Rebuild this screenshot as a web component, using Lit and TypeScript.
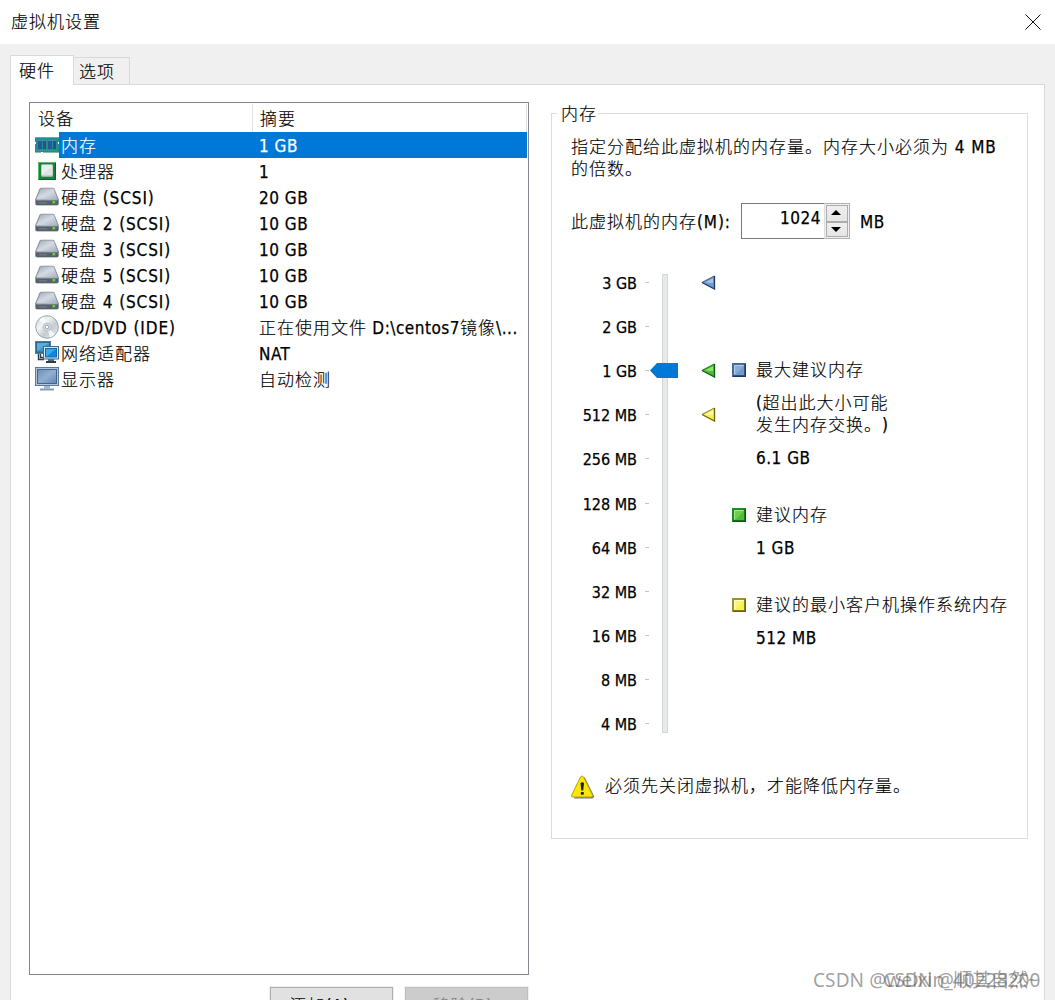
import { LitElement, html, svg, css } from "lit";
import { customElement, property } from "lit/decorators.js";
import { classMap } from "lit/directives/class-map.js";

/* Text made of runs: CJK characters sit on an even advance, Latin runs use the UI face. */
@customElement("ui-text")
class UiText extends LitElement {
  @property() text = "";
  @property() tone = "wide";
  static styles = css`
    :host { display: inline; white-space: pre; text-spacing-trim: space-all; }
    .cjk { font: 17px/0 "Noto Sans CJK SC", sans-serif; letter-spacing: 1px; font-weight: 300; -webkit-text-stroke: 0.15px currentColor; }
    .lat { font: 17px/22px "DejaVu Sans Condensed", "DejaVu Sans", sans-serif; font-stretch: condensed; -webkit-text-stroke: 0.25px currentColor; }
    .wide { letter-spacing: 0.5px; }
    .wider { letter-spacing: 0.9px; }
    .tight { font-size: 16px; letter-spacing: 0; }
  `;
  render() {
    const runs = this.text.match(/[\u3000-\u9fff\uff00-\uffef]+|[^\u3000-\u9fff\uff00-\uffef]+/g) ?? [];
    return runs.map((r) => {
      const cjk = /^[\u3000-\u9fff\uff00-\uffef]/.test(r);
      return html`<span class=${classMap({ cjk, lat: !cjk, [this.tone]: !cjk })}>${r}</span>`;
    });
  }
}

const diskIcon = svg`
  <defs><linearGradient id="d" x1="0" y1="0" x2="1" y2="1"><stop offset="0" stop-color="#9fa9b6"/><stop offset=".5" stop-color="#d3dae2"/><stop offset="1" stop-color="#a5afbc"/></linearGradient></defs>
  <g transform="translate(0 1.300)">
  <path d="M4.500 3.500Q5 2.500 6.500 2.500H17.500Q19 2.500 19.500 3.500L23.800 14V18.500Q23.800 20.300 22 20.300H2Q.2 20.300 .2 18.500V14Z" fill="#8791a0"/>
  <path d="M5.500 4Q5.800 3.300 6.500 3.300H17.500Q18.500 3.300 18.800 4L22.700 14H1.300Z" fill="url(#d)"/>
  <path d="M.8 14.500H23.200V18.500Q23.200 19.700 22 19.700H2Q.8 19.700 .8 18.500Z" fill="#57616d"/>
  <path d="M1.500 14.500H22.500" stroke="#bcc4ce" stroke-width="1"/>
  <path d="M4 17.500H12" stroke="#78828e"/><rect x="17" y="15.500" width="3.500" height="3" fill="#4f9b35"/><rect x="18" y="16" width="1.500" height="1.500" fill="#a7e57b"/></g>`;

const icons: Record<string, unknown> = {
  memory: svg`
    <rect x="0" y="5" width="24" height="15" fill="#238c94"/><path d="M0 5.500H24" stroke="#55aeb5"/>
    <rect x="0" y="17" width="24" height="4" fill="#238d82"/><path d="M0 20.500H24" stroke="#83bfa8"/>
    <path d="M1 18.500H23" stroke="#3ba7a5" stroke-dasharray="1 1"/>
    <rect x="3" y="8" width="4" height="9" fill="#235a91"/><rect x="8" y="8" width="3" height="9" fill="#265383"/><rect x="13" y="8" width="4" height="9" fill="#235a91"/><rect x="18" y="8" width="3" height="9" fill="#265383"/>
    <path d="M3 8.500H11M13 8.500H21" stroke="#4e86b1"/><rect x="0" y="10" width="1" height="2" fill="#fff"/><rect x="23" y="10" width="1" height="2" fill="#fff"/><rect x="6" y="20" width="2" height="1" fill="#fff"/>`,
  cpu: svg`
    <rect x="3" y="4" width="18" height="18" rx="1" fill="#16853a"/><path d="M3.500 21V4.500H20" stroke="#58b865" fill="none"/>
    <path d="M4 21.500H20.500V5" stroke="#086029" fill="none"/>
    <rect x="6" y="6" width="12" height="13" rx="1.500" fill="#9dafaa"/><rect x="6.500" y="7" width="11" height="10.500" rx="1" fill="#eceeed"/><path d="M7 17L17 8V17Z" fill="#dde3e1"/>`,
  disk: diskIcon,
  cd: svg`
    <defs><linearGradient id="c" x1="0" y1="0" x2="1" y2="1"><stop offset="0" stop-color="#c4ccd2"/><stop offset=".35" stop-color="#f2f5f6"/><stop offset=".6" stop-color="#c5ccd2"/><stop offset="1" stop-color="#e8ecee"/></linearGradient></defs>
    <g transform="translate(0 1)"><circle cx="12" cy="12" r="11.300" fill="url(#c)" stroke="#9ba7b0" stroke-width="1"/>
    <path d="M12 12L4 5A11 11 0 0 1 9 1.500ZM12 12L20 19A11 11 0 0 1 15 22.500Z" fill="#fff" opacity=".75"/>
    <circle cx="12" cy="12" r="4" fill="#d5dce1" stroke="#b1bbc2" stroke-width=".8"/><circle cx="12" cy="12" r="1.800" fill="#fff" stroke="#8b98a3" stroke-width=".8"/></g>`,
  net: svg`<g transform="translate(0 1)">
    <rect x="0.500" y="0.500" width="15" height="12" fill="#2d668e" stroke="#4a819e"/><rect x="2" y="2" width="12" height="8.500" fill="#4592c6"/><path d="M2 10V2H14Z" fill="#5aaddc"/>
    <path d="M3.500 13V18.500H9M5.500 13V16.500H9" fill="none" stroke="#263d4c" stroke-width="1.400"/>
    <rect x="8.500" y="5.500" width="15" height="12.500" fill="#d6e8f2" stroke="#336d93"/><rect x="10.500" y="7.500" width="11" height="8.500" fill="#0c86df" stroke="#1d639b"/><path d="M11 16V8H21Z" fill="#37a8f2"/>
    <rect x="13" y="18" width="6" height="2" fill="#506c7f"/><rect x="11" y="20" width="10" height="2" fill="#293f4f"/></g>`,
  display: svg`
    <defs><linearGradient id="m" x1="0" y1="0" x2="1" y2="1"><stop offset="0" stop-color="#6d8fb8"/><stop offset=".5" stop-color="#91afd0"/><stop offset="1" stop-color="#6386b2"/></linearGradient></defs>
    <g transform="translate(0 1)"><rect x=".5" y=".5" width="23" height="18" fill="#b4c7da" stroke="#557aa5"/><rect x="2.500" y="2.500" width="19" height="14" fill="url(#m)" stroke="#42658e"/>
    <rect x="9" y="19" width="6" height="2.500" fill="#a4b5c7"/><path d="M5 22.500H19" stroke="#829bb5" stroke-width="2"/></g>`,
};

const devices = [
  ["memory", "内存", "1 GB"],
  ["cpu", "处理器", "1"],
  ["disk", "硬盘 (SCSI)", "20 GB"],
  ["disk", "硬盘 2 (SCSI)", "10 GB"],
  ["disk", "硬盘 3 (SCSI)", "10 GB"],
  ["disk", "硬盘 5 (SCSI)", "10 GB"],
  ["disk", "硬盘 4 (SCSI)", "10 GB"],
  ["cd", "CD/DVD (IDE)", "正在使用文件 D:\\centos7镜像\\..."],
  ["net", "网络适配器", "NAT"],
  ["display", "显示器", "自动检测"],
];

const scale = ["3 GB", "2 GB", "1 GB", "512 MB", "256 MB", "128 MB", "64 MB", "32 MB", "16 MB", "8 MB", "4 MB"];

const hues: Record<string, string[]> = {
  blue: ["#4a6a98", "#1c3766", "#b4cdea", "#6f9bce"],
  green: ["#218a25", "#0b5a10", "#a3ee85", "#4fbd38"],
  yellow: ["#9a9430", "#6b6508", "#ffffc4", "#f7f24a"],
};
const markers: Record<number, string> = { 0: "blue", 2: "green", 3: "yellow" };

const triangle = (hue: string) => {
  const [light, dark, hi, fill] = hues[hue];
  return html`<svg width="15" height="15" viewBox="0 0 15 15">
    <path d="M1 7.500L14 .8V14.200Z" fill=${fill} />
    <path d="M4 7.500L12 3.300V8Z" fill=${hi} opacity=".8" />
    <path d="M13.500 1L1 7.500" stroke=${light} stroke-width="1.300" fill="none" />
    <path d="M1 7.500L13.500 14V1" stroke=${dark} stroke-width="1.300" fill="none" />
  </svg>`;
};
const swatch = (hue: string) => {
  const [light, dark, hi, fill] = hues[hue];
  return html`<svg width="14" height="14" viewBox="0 0 14 14">
    <rect width="14" height="14" fill=${light} /><path d="M1 13.300H13.300V1" fill="none" stroke=${dark} stroke-width="1.400" />
    <rect x="2" y="2" width="10" height="10" fill=${fill} /><path d="M2.500 11.500V2.500H11.500" fill="none" stroke=${hi} />
    <path d="M3 12V3H12Z" fill=${hi} opacity=".35" />
  </svg>`;
};

@customElement("app-root")
class AppRoot extends LitElement {
  static styles = css`
    :host { display: block; color: #000; font: 17px/22px "DejaVu Sans Condensed", "Noto Sans CJK SC", sans-serif; }
    * { box-sizing: border-box; }
    svg { display: block; flex: none; }
    .window { position: relative; width: 1055px; height: 1000px; overflow: hidden; background: #f0f0f0; display: flex; flex-direction: column; }
    .titlebar { height: 44px; flex: none; background: #fff; display: flex; justify-content: space-between; align-items: center; padding: 0 14px 0 11px; }
    .tabs { flex: none; height: 40px; padding-left: 10px; display: flex; align-items: flex-end; }
    .tab { border: 1px solid #d9d9d9; border-bottom: 0; height: 27px; width: 57px; padding: 3px 0 0 5px; margin-left: -1px; white-space: nowrap; }
    .tab.on { height: 30px; width: 64px; background: #fff; padding: 4px 0 0 8px; margin: 0 0 -1px; z-index: 1; }
    .page { flex: 1; min-height: 0; margin: 0 10px; border: 1px solid #d9d9d9; border-bottom: 0; background: #fff; padding: 17px 16px 0 18px; display: flex; gap: 22px; align-items: flex-start; }
    .left { width: 500px; flex: none; }
    .list { height: 873px; border: 1px solid #828790; padding: 0 1px; }
    .head { height: 29px; display: flex; }
    .head div { border-right: 1px solid #e2e2e2; margin-top: 1px; padding: 4px 0 0 7px; }
    .head .c1 { width: 222px; }
    .head .c2 { flex: 1; padding-left: 7px; }
    .row { display: flex; height: 26px; padding-left: 4px; }
    .row svg { width: 24px; height: 26px; }
    .cells { flex: 1; display: flex; align-items: center; padding: 2px 0 0 2px; white-space: nowrap; }
    .cells .name { width: 198px; }
    .row.sel .cells { background: #0078d7; color: #fff; }
    .buttons { display: flex; justify-content: flex-end; gap: 10px; margin-top: 11px; }
    .btn { width: 125px; height: 40px; border: 1px solid #f0f0f0; }
    .btn div { height: 38px; border: 1px solid #adadad; background: #e1e1e1; padding: 7px 8px 0 0; text-align: center; }
    .btn.off div { background: #ccc; border-color: #bfbfbf; color: #838383; }
    .group { flex: 1; height: 726px; margin-top: 11px; border: 1px solid #dcdcdc; padding-left: 19px; }
    .legend { width: 41px; height: 22px; background: #fff; margin: -11px 0 0 -14px; padding-left: 4px; white-space: nowrap; }
    .desc { margin-top: 11px; height: 44px; white-space: nowrap; }
    .amount { display: flex; align-items: center; margin-top: 23px; height: 36px; }
    .amount .cap { width: 170px; white-space: nowrap; padding-top: 1px; }
    .spin { width: 109px; height: 36px; border: 1px solid #7a7a7a; display: flex; justify-content: flex-end; }
    .spin .val { padding: 3px 4px 0 0; }
    .arrows { width: 26px; margin: -1px; border: 1px solid #b0b0b0; background: #f0f0f0; border-left-color: #ddd; display: flex; flex-direction: column; padding: 1px; }
    .arrows div { flex: 1; border: 1px solid #acacac; background: linear-gradient(#efefef, #e5e5e5); display: flex; align-items: center; justify-content: center; padding-right: 2px; }
    .arrows div:first-child { padding-bottom: 1px; }
    .unit { margin-left: 10px; padding-top: 1px; }
    .meter { position: relative; display: flex; margin-top: 21px; height: 486px; }
    .scale { display: grid; grid-template-columns: 74px 17px 6px 33px 30px; grid-template-rows: repeat(11, 44.200px); align-items: center; }
    .lab { grid-column: 1; text-align: right; padding: 2px 8px 0 0; }
    .tick { grid-column: 2; width: 4px; height: 1px; background: #c4c4c4; }
    .track { grid-column: 3; grid-row: 1 / 12; align-self: stretch; margin: 14px 0 13px; border: 1px solid #d6d6d6; background: #e7eaea; }
    .mark { grid-column: 5; }
    .thumb { position: absolute; left: 79px; top: 103px; }
    .notes { padding: 99px 0 0 1px; white-space: nowrap; }
    .note { display: grid; grid-template-columns: 14px auto; column-gap: 10px; align-items: center; }
    .note .body { grid-column: 2; margin-top: 11px; }
    .note + .note { margin-top: 35px; }
    .warn { display: flex; align-items: center; gap: 11px; margin-top: 29px; height: 24px; }
    .warn ui-text { display: block; padding-bottom: 2px; }
    .mark1, .mark2 { position: absolute; top: 968px; font: 19px/24px "Noto Sans", "Noto Sans CJK SC", sans-serif; white-space: nowrap; color: rgba(100, 100, 100, 0.62); }
    .mark1 { left: 813px; letter-spacing: 0.1px; }
    .mark2 { left: 883px; letter-spacing: -0.4px; }
  `;

  render() {
    const t = (text: string, tone = "wide") => html`<ui-text .text=${text} .tone=${tone}></ui-text>`;
    const note = (hue: string, title: string, lines: unknown, value: string) => html`
      <div class="note">${swatch(hue)}<div>${t(title)}</div>
        ${lines}<div class="body">${t(value)}</div>
      </div>`;
    return html`<div class="window">
      <div class="titlebar">${t("虚拟机设置")}
        <svg width="16" height="16" viewBox="0 0 16 16"><path d="M.5 .5L15.500 15.500M15.500 .5L.5 15.500" stroke="#111" stroke-width="1" /></svg>
      </div>
      <div class="tabs"><div class="tab on">${t("硬件")}</div><div class="tab">${t("选项")}</div></div>
      <div class="page">
        <div class="left">
          <div class="list">
            <div class="head"><div class="c1">${t("设备")}</div><div class="c2">${t("摘要")}</div></div>
            ${devices.map(([icon, name, summary], i) => html`
              <div class=${classMap({ row: true, sel: i === 0 })}>
                <svg viewBox="0 0 24 26">${icons[icon]}</svg>
                <div class="cells"><div class="name">${t(name, "wider")}</div><div>${t(summary)}</div></div>
              </div>`)}
          </div>
          <div class="buttons">
            <div class="btn"><div>${t("添加(A)...")}</div></div>
            <div class="btn off"><div>${t("移除(R)")}</div></div>
          </div>
        </div>
        <div class="group">
          <div class="legend">${t("内存")}</div>
          <div class="desc">${t("指定分配给此虚拟机的内存量。内存大小必须为 4 MB", "wider")}<br />${t("的倍数。")}</div>
          <div class="amount">
            <div class="cap">${t("此虚拟机的内存(M):", "wider")}</div>
            <div class="spin"><div class="val">${t("1024")}</div>
              <div class="arrows">
                <div><svg width="10" height="5" viewBox="0 0 10 5"><path d="M0 5L5 0L10 5Z" /></svg></div>
                <div><svg width="10" height="5" viewBox="0 0 10 5"><path d="M0 0L5 5L10 0Z" /></svg></div>
              </div>
            </div>
            <div class="unit">${t("MB")}</div>
          </div>
          <div class="meter">
            <div class="scale">
              <div class="track"></div>
              ${scale.map((s, i) => html`
                <div class="lab" style="grid-row:${i + 1}">${t(s, "tight")}</div>
                <div class="tick" style="grid-row:${i + 1}"></div>
                ${markers[i] ? html`<div class="mark" style="grid-row:${i + 1}">${triangle(markers[i])}</div>` : ""}`)}
            </div>
            <svg class="thumb" width="28" height="15" viewBox="0 0 28 15"><path d="M0 7.500L7 0H28V15H7Z" fill="#0078d7" /></svg>
            <div class="notes">
              ${note("blue", "最大建议内存", html`<div class="body">${t("(超出此大小可能")}<br />${t("发生内存交换。)")}</div>`, "6.1 GB")}
              ${note("green", "建议内存", "", "1 GB")}
              ${note("yellow", "建议的最小客户机操作系统内存", "", "512 MB")}
            </div>
          </div>
          <div class="warn">
            <svg width="23" height="24" viewBox="0 0 23 24">
              <path d="M12.500 2Q14 2 14.700 4L23 21Q23.300 23.500 21 23.500H3Z" fill="#777b8c" />
              <path d="M9.500 2Q11 -.2 12.600 2L21.500 20Q22 22 20 22H2Q0 22 .7 20Z" fill="#fbe800" stroke="#b6a316" stroke-width="1" />
              <path d="M9.500 8Q11.300 6.500 13 8L12.200 15.500H10.300Z" fill="#1b1b30" /><rect x="9.800" y="17" width="3" height="2.800" rx=".8" fill="#1b1b30" />
            </svg>${t("必须先关闭虚拟机，才能降低内存量。")}
          </div>
        </div>
      </div>
      <div class="mark1">CSDN @weixin_40228200</div>
      <div class="mark2">CSDN @顺其自然~</div>
    </div>`;
  }
}
